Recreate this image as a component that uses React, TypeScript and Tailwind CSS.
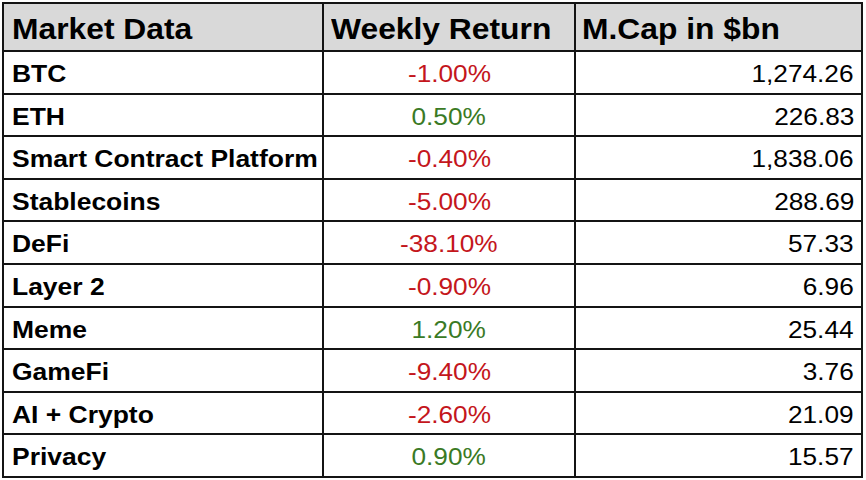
import React from "react";

type Row = { name: string; ret: string; up: boolean; cap: string };

const rows: Row[] = [
  { name: "BTC", ret: "-1.00%", up: false, cap: "1,274.26" },
  { name: "ETH", ret: "0.50%", up: true, cap: "226.83" },
  { name: "Smart Contract Platform", ret: "-0.40%", up: false, cap: "1,838.06" },
  { name: "Stablecoins", ret: "-5.00%", up: false, cap: "288.69" },
  { name: "DeFi", ret: "-38.10%", up: false, cap: "57.33" },
  { name: "Layer 2", ret: "-0.90%", up: false, cap: "6.96" },
  { name: "Meme", ret: "1.20%", up: true, cap: "25.44" },
  { name: "GameFi", ret: "-9.40%", up: false, cap: "3.76" },
  { name: "AI + Crypto", ret: "-2.60%", up: false, cap: "21.09" },
  { name: "Privacy", ret: "0.90%", up: true, cap: "15.57" },
];

const head = "flex h-[48px] items-center whitespace-nowrap border-b-2 border-r-2 border-[#141414] bg-[#d9d9d9] pt-[3px] text-[30px] font-bold";
const cell = "flex h-[42.6px] items-center overflow-hidden whitespace-nowrap border-b-2 border-r-2 border-[#141414] pt-[4px] text-[23px]";

export default function App() {
  return (
    <div className="h-[480px] w-[866px] overflow-hidden bg-white pl-[2px] pt-[2px] font-['Liberation_Sans',Arial,sans-serif] text-black">
      <div className="grid w-[861px] grid-cols-[320px_252px_287px] border-l-2 border-t-2 border-[#141414]">
        <div className={head + " pl-[8px]"}>
          <span className="inline-block origin-left scale-x-[1.06]">Market Data</span>
        </div>
        <div className={head + " pl-[7px]"}>
          <span className="inline-block origin-left scale-x-[1.06]">Weekly Return</span>
        </div>
        <div className={head + " pl-[6px]"}>
          <span className="inline-block origin-left scale-x-[1.06]">M.Cap in $bn</span>
        </div>

        {rows.map((r) => (
          <React.Fragment key={r.name}>
            <div className={cell + " pl-[8px] font-bold"}>
              <span className="inline-block origin-left scale-x-[1.15]">{r.name}</span>
            </div>
            <div className={cell + " justify-center " + (r.up ? "text-[#3a7a25]" : "text-[#c4161c]")}>
              <span className="inline-block origin-center scale-x-[1.14]">{r.ret}</span>
            </div>
            <div className={cell + " justify-end pr-[7px]"}>
              <span className="inline-block origin-right scale-x-[1.14]">{r.cap}</span>
            </div>
          </React.Fragment>
        ))}
      </div>
    </div>
  );
}
